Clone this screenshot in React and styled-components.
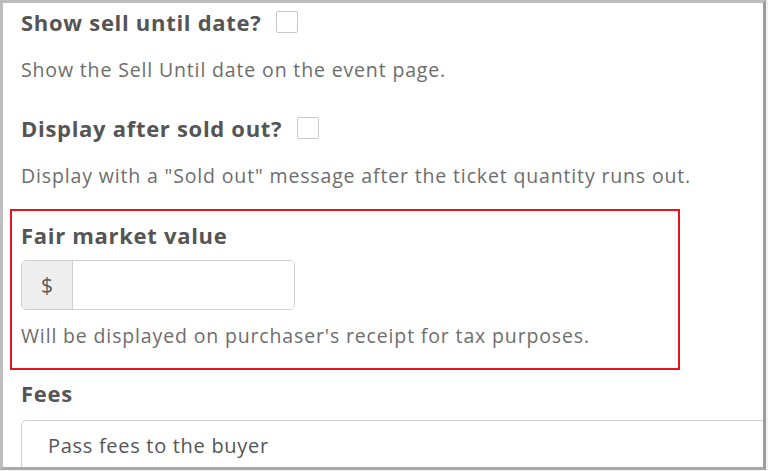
import React from "react";
import styled, { createGlobalStyle } from "styled-components";

const GlobalStyle = createGlobalStyle`
  html, body {
    margin: 0;
    padding: 0;
    background: #f2f2f2;
  }
  * {
    box-sizing: border-box;
  }
`;

const Frame = styled.div`
  width: 766px;
  height: 470px;
  background: #fff;
  border-top: 3px solid #bdbdbd;
  border-left: 3px solid #bdbdbd;
  border-right: 3px solid #9c9c9c;
  border-bottom: 3px solid #a9a9a9;
  overflow: hidden;
  font-family: "Open Sans", "Noto Sans", sans-serif;
`;

const Content = styled.div`
  padding: 4px 0 0 18px;
`;

const Field = styled.div`
  margin-bottom: ${(p) => p.gap || 0}px;
`;

const LabelRow = styled.div`
  display: flex;
  align-items: center;
  gap: 15px;
  height: 30px;
  margin-top: ${(p) => p.top || 0}px;
`;

const Heading = styled.label`
  font-size: 22px;
  font-weight: 700;
  color: #555;
  line-height: 30px;
  letter-spacing: 0.7px;
`;

const Checkbox = styled.span`
  display: inline-block;
  width: 22px;
  height: 22px;
  border: 1px solid #c8c8c8;
  border-radius: 2px;
  background: #fff;
`;

const Help = styled.p`
  margin: ${(p) => p.top || 0}px 0 0;
  font-size: 19.5px;
  line-height: 26px;
  color: #6d6d6d;
  letter-spacing: 0.85px;
  white-space: nowrap;
`;

const Highlight = styled.div`
  margin-left: -11px;
  width: 670px;
  height: 161px;
  border: 2px solid #e8121b;
  padding: 9px 0 0 9px;
`;

const InputGroup = styled.div`
  display: flex;
  width: 274px;
  height: 50px;
  margin-top: 10px;
  border: 1px solid #cfcfcf;
  border-radius: 5px;
  overflow: hidden;
`;

const Addon = styled.span`
  width: 51px;
  display: flex;
  align-items: center;
  justify-content: center;
  background: #eeeeee;
  border-right: 1px solid #cfcfcf;
  color: #5a5a5a;
  font-size: 21px;
`;

const Input = styled.input`
  flex: 1;
  border: none;
  outline: none;
  background: #fff;
`;

const Select = styled.div`
  width: 780px;
  height: 60px;
  margin-top: 12px;
  border: 1px solid #cfcfcf;
  border-radius: 5px;
  padding: 11px 0 0 26px;
  font-size: 20px;
  color: #555;
  letter-spacing: 0.7px;
`;

export default function App() {
  return (
    <>
      <GlobalStyle />
      <Frame>
        <Content>
          <Field gap={30}>
            <LabelRow>
              <Heading>Show sell until date?</Heading>
              <Checkbox />
            </LabelRow>
            <Help top={20}>Show the Sell Until date on the event page.</Help>
          </Field>
          <Field gap={20}>
            <LabelRow>
              <Heading>Display after sold out?</Heading>
              <Checkbox />
            </LabelRow>
            <Help top={20}>
              Display with a "Sold out" message after the ticket quantity runs out.
            </Help>
          </Field>
          <Highlight>
            <LabelRow>
              <Heading>Fair market value</Heading>
            </LabelRow>
            <InputGroup>
              <Addon>$</Addon>
              <Input />
            </InputGroup>
            <Help top={13}>Will be displayed on purchaser's receipt for tax purposes.</Help>
          </Highlight>
          <Field>
            <LabelRow top={8}>
              <Heading>Fees</Heading>
            </LabelRow>
            <Select>Pass fees to the buyer</Select>
          </Field>
        </Content>
      </Frame>
    </>
  );
}
